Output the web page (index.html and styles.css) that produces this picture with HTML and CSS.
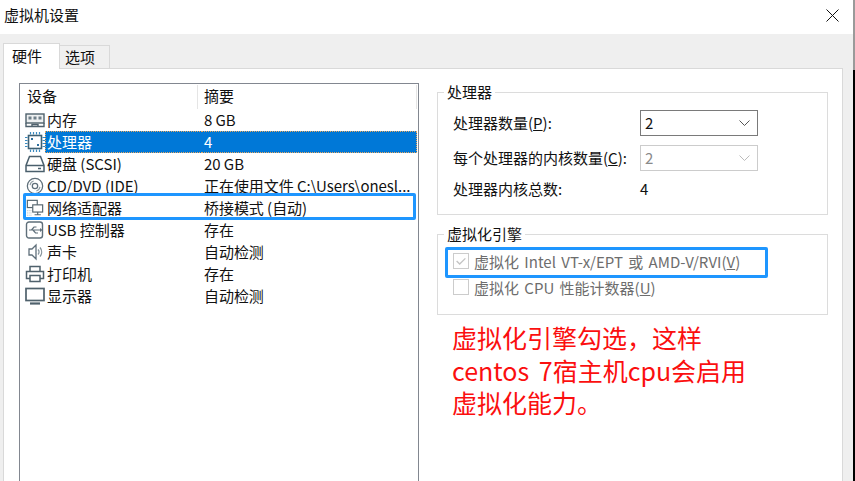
FILE: index.html
```html
<!DOCTYPE html>
<html lang="zh-CN">
<head>
<meta charset="utf-8">
<title>虚拟机设置</title>
<link rel="stylesheet" href="styles.css">
</head>
<body>
<div class="dialog">
  <header class="titlebar">
    <span class="title">虚拟机设置</span>
    <svg class="close" viewBox="0 0 13 13" width="13" height="13"><path d="M.5.500l12 12M12.500.500l-12 12" stroke="#111" stroke-width="1" fill="none"/></svg>
  </header>
  <div class="body">
    <div class="tabs">
      <div class="tab active">硬件</div>
      <div class="tab">选项</div>
    </div>
    <div class="panel">
      <div class="list">
        <div class="list-head"><div class="c1">设备</div><div class="c2">摘要</div></div>
        <div class="row"><svg class="ico" viewBox="0 0 20 18"><rect x="1" y="3" width="18" height="9" fill="#eef0f1" stroke="#4f616c" stroke-width="1.400"/><path d="M3.500 5.500h3v3h-3zM8.500 5.500h3v3h-3zM13.500 5.500h3v3h-3z" fill="#6f7f89"/><path d="M1 12v3.500h18V12M7 15.500v-2h6v2" fill="none" stroke="#4f616c" stroke-width="1.400"/></svg><span class="n">内存</span><span class="v">8 GB</span></div>
        <div class="row sel"><svg class="ico" viewBox="0 0 20 20"><rect x="3.500" y="3.500" width="13" height="13" fill="#fff" stroke="#3f6072" stroke-width="1.600"/><path d="M5.500 0v2.500M8.500 0v2.500M11.500 0v2.500M14.500 0v2.500M5.500 17.500V20M8.500 17.500V20M11.500 17.500V20M14.500 17.500V20M0 5.500h2.500M0 8.500h2.500M0 11.500h2.500M0 14.500h2.500M17.500 5.500H20M17.500 8.500H20M17.500 11.500H20M17.500 14.500H20" stroke="#3b8ac0" stroke-width="1.200"/><rect x="6" y="6" width="2" height="2" fill="#2d6f9e"/><rect x="12" y="12" width="2" height="2" fill="#2d6f9e"/></svg><span class="n">处理器</span><span class="v">4</span></div>
        <div class="row"><svg class="ico" viewBox="0 0 20 18"><path d="M4.500 1.500h11l3.500 9v6H1v-6zM1 10.500h18" fill="none" stroke="#4a5f6c" stroke-width="1.500"/><path d="M13 13.500h3" stroke="#4a5f6c" stroke-width="1.500"/></svg><span class="n">硬盘 (SCSI)</span><span class="v">20 GB</span></div>
        <div class="row"><svg class="ico" viewBox="0 0 20 20"><circle cx="10" cy="10" r="8.500" fill="#fff" stroke="#5f6f7a" stroke-width="1.400"/><circle cx="10" cy="10" r="3" fill="none" stroke="#5f6f7a" stroke-width="1.400"/><path d="M4.500 9a5.500 5.500 0 0 1 4-4.500M15.500 11a5.500 5.500 0 0 1-4 4.500" stroke="#8f9ca4" stroke-width="1.200" fill="none"/></svg><span class="n">CD/DVD (IDE)</span><span class="v">正在使用文件 C:\Users\onesl...</span></div>
        <div class="row"><svg class="ico" viewBox="0 0 20 20"><rect x="1.500" y="1.500" width="11" height="8" fill="#fff" stroke="#55666f" stroke-width="1.300"/><rect x="7.500" y="6.500" width="11" height="8" fill="#fff" stroke="#55666f" stroke-width="1.300"/><path d="M13 14.500v3M9.500 17.500h7" stroke="#55666f" stroke-width="1.300"/><path d="M1 13h5M1 15.500h5M1 18h6" stroke="#9fb0ba" stroke-dasharray="1 1"/></svg><span class="n">网络适配器</span><span class="v">桥接模式 (自动)</span></div>
        <div class="row"><svg class="ico" viewBox="0 0 20 18"><rect x="1.500" y="1" width="16" height="16" rx="2.500" fill="#fff" stroke="#5f6f7a" stroke-width="1.400"/><path d="M4 9h11M6.500 9l2.500-3h2.500M8 9l2.500 3H13" fill="none" stroke="#5f6f7a" stroke-width="1.200"/><path d="M15 7v4l2.500-2z" fill="#5f6f7a"/></svg><span class="n">USB 控制器</span><span class="v">存在</span></div>
        <div class="row"><svg class="ico" viewBox="0 0 20 18"><path d="M4 6h3l4-4v14l-4-4H4z" fill="#fff" stroke="#5f6f7a" stroke-width="1.300"/><path d="M13 6.500a3.500 3.500 0 0 1 0 5M15 4.500a7 7 0 0 1 0 9" fill="none" stroke="#86939b" stroke-width="1.300"/></svg><span class="n">声卡</span><span class="v">自动检测</span></div>
        <div class="row"><svg class="ico" viewBox="0 0 20 18"><path d="M5 6.500v-5h10v5M5 13.500H1.500v-7h17v7H15" fill="#fff" stroke="#4f616c" stroke-width="1.500"/><rect x="5" y="10.500" width="10" height="6" fill="#fff" stroke="#4f616c" stroke-width="1.500"/></svg><span class="n">打印机</span><span class="v">存在</span></div>
        <div class="row"><svg class="ico" viewBox="0 0 20 18"><rect x="1" y="1.500" width="18" height="12" fill="#fff" stroke="#4f616c" stroke-width="1.700"/><path d="M5 16.500h10" stroke="#4f616c" stroke-width="2.200"/></svg><span class="n">显示器</span><span class="v">自动检测</span></div>
      </div>
      <div class="side">
        <fieldset class="group cpu">
          <legend>处理器</legend>
          <div class="field"><label>处理器数量(<u>P</u>):</label><div class="combo"><span>2</span><svg viewBox="0 0 11 6" width="11" height="6"><path d="M.5.500l5 5 5-5" fill="none" stroke="#555"/></svg></div></div>
          <div class="field off"><label>每个处理器的内核数量(<u>C</u>):</label><div class="combo"><span>2</span><svg viewBox="0 0 11 6" width="11" height="6"><path d="M.5.500l5 5 5-5" fill="none" stroke="#bbb"/></svg></div></div>
          <div class="field total"><label>处理器内核总数:</label><div class="plain">4</div></div>
        </fieldset>
        <fieldset class="group virt">
          <legend>虚拟化引擎</legend>
          <div class="check"><span class="box"><svg viewBox="0 0 16 16" width="14" height="14"><path d="M3 8l3.500 3.500L13 5" fill="none" stroke="#c4c4c4" stroke-width="1.500"/></svg></span>虚拟化 Intel VT-x/EPT 或 AMD-V/RVI(<u>V</u>)</div>
          <div class="check"><span class="box"></span>虚拟化 CPU 性能计数器(<u>U</u>)</div>
        </fieldset>
        <p class="note">虚拟化引擎勾选，这样<br>centos 7宿主机cpu会启用<br>虚拟化能力。</p>
      </div>
      <div class="mark mark-net"></div>
      <div class="mark mark-virt"></div>
    </div>
  </div>
</div>
<div class="edge"></div>
</body>
</html>
```

FILE: styles.css
```css
* { box-sizing: border-box; }
html, body { margin: 0; height: 100%; overflow: hidden; background: #fff; }
body { display: flex; font-family: "Noto Sans CJK SC", "Open Sans", sans-serif; font-size: 15px; color: #111; }
.dialog { width: 853px; height: 481px; flex: none; display: flex; flex-direction: column; }
.edge { width: 2px; height: 481px; flex: none; background: linear-gradient(#9a9a9a 0 70px, #000 70px); }
.titlebar { height: 34px; display: flex; align-items: center; justify-content: space-between; padding: 0 14px 4px 4px; flex: none; }
.title { margin-bottom: 2px; }
.close { flex: none; }
.body { flex: 1; background: #efefef; padding: 10px 10px 0 3px; display: flex; flex-direction: column; min-height: 0; }
.tabs { display: flex; height: 24px; flex: none; align-items: flex-end; }
.tab { height: 23px; width: 50px; border: 1px solid #d9d9d9; border-bottom: 0; border-left: 0; background: #f0f0f0; padding-left: 5px; line-height: 22px; }
.tab.active { height: 26px; width: 57px; background: #fff; position: relative; z-index: 1; margin-bottom: -1px; border-left: 1px solid #d9d9d9; padding-left: 8px; line-height: 23px; }
.panel { flex: 1; background: #fff; border: 1px solid #d9d9d9; border-bottom: 0; display: flex; padding: 14px 14px 0 15px; position: relative; }
.list { width: 400px; flex: none; border: 1px solid #828790; border-bottom: 0; padding: 1px 0 0; }
.list-head { display: flex; height: 24px; line-height: 22px; }
.c1 { width: 178px; padding-left: 7px; border-right: 1px solid #e5e5e5; }
.c2 { flex: 1; padding-left: 6px; border-right: 1px solid #e5e5e5; margin-right: 1px; }
.row { display: flex; align-items: center; height: 22px; line-height: 20px; }
.ico { width: 20px; height: 18px; margin-left: 5px; flex: none; }
.row.sel .ico { height: 20px; }
.n { width: 157px; padding-left: 2px; white-space: nowrap; }
.v { flex: 1; padding-left: 2px; white-space: nowrap; letter-spacing: -0.05px; }
.row.sel .n, .row.sel .v { background: #0078d7; color: #fff; height: 22px; border-top: 1px dotted #e8a860; border-bottom: 1px dotted #e8a860; }
.row.sel .n { border-left: 1px dotted #e8a860; padding-left: 1px; }
.row.sel .v { margin-right: 1px; border-right: 1px dotted #e8a860; }
.side { flex: 1; margin-left: 18px; display: flex; flex-direction: column; }
.group { border: 1px solid #dcdcdc; margin: 0; padding: 0; flex: none; }
.group legend { margin-left: -9px; padding: 0 3px; line-height: 18px; }
.cpu { height: 132px; padding: 4px 0 0 15px; }
.field { display: flex; align-items: center; height: 35px; }
.field.total { height: 27px; }
.field label { width: 187px; white-space: nowrap; }
.combo { width: 118px; height: 26px; border: 1px solid #7a7a7a; display: flex; align-items: center; justify-content: space-between; padding: 0 7px 0 4px; }
.off .combo { border-color: #cccccc; color: #8a8a8a; }
.virt { height: 90px; margin-top: 10px; padding: 5px 0 0 15px; color: #6d6d6d; }
.virt legend { color: #111; }
.check { display: flex; align-items: center; height: 26px; white-space: pre; word-spacing: 2px; }
.box { width: 16px; height: 16px; border: 1px solid #cccccc; margin-right: 5px; flex: none; display: flex; align-items: center; justify-content: center; }
.note { margin: 6px 0 0 15px; color: #fb0f0f; font-size: 25px; line-height: 32.5px; word-spacing: 4px; }
.mark { position: absolute; border: 3px solid #1e96ff; border-radius: 2px; }
.mark-net { left: 19px; top: 124px; width: 393px; height: 27px; }
.mark-virt { left: 441px; top: 178px; width: 323px; height: 31px; }
```
